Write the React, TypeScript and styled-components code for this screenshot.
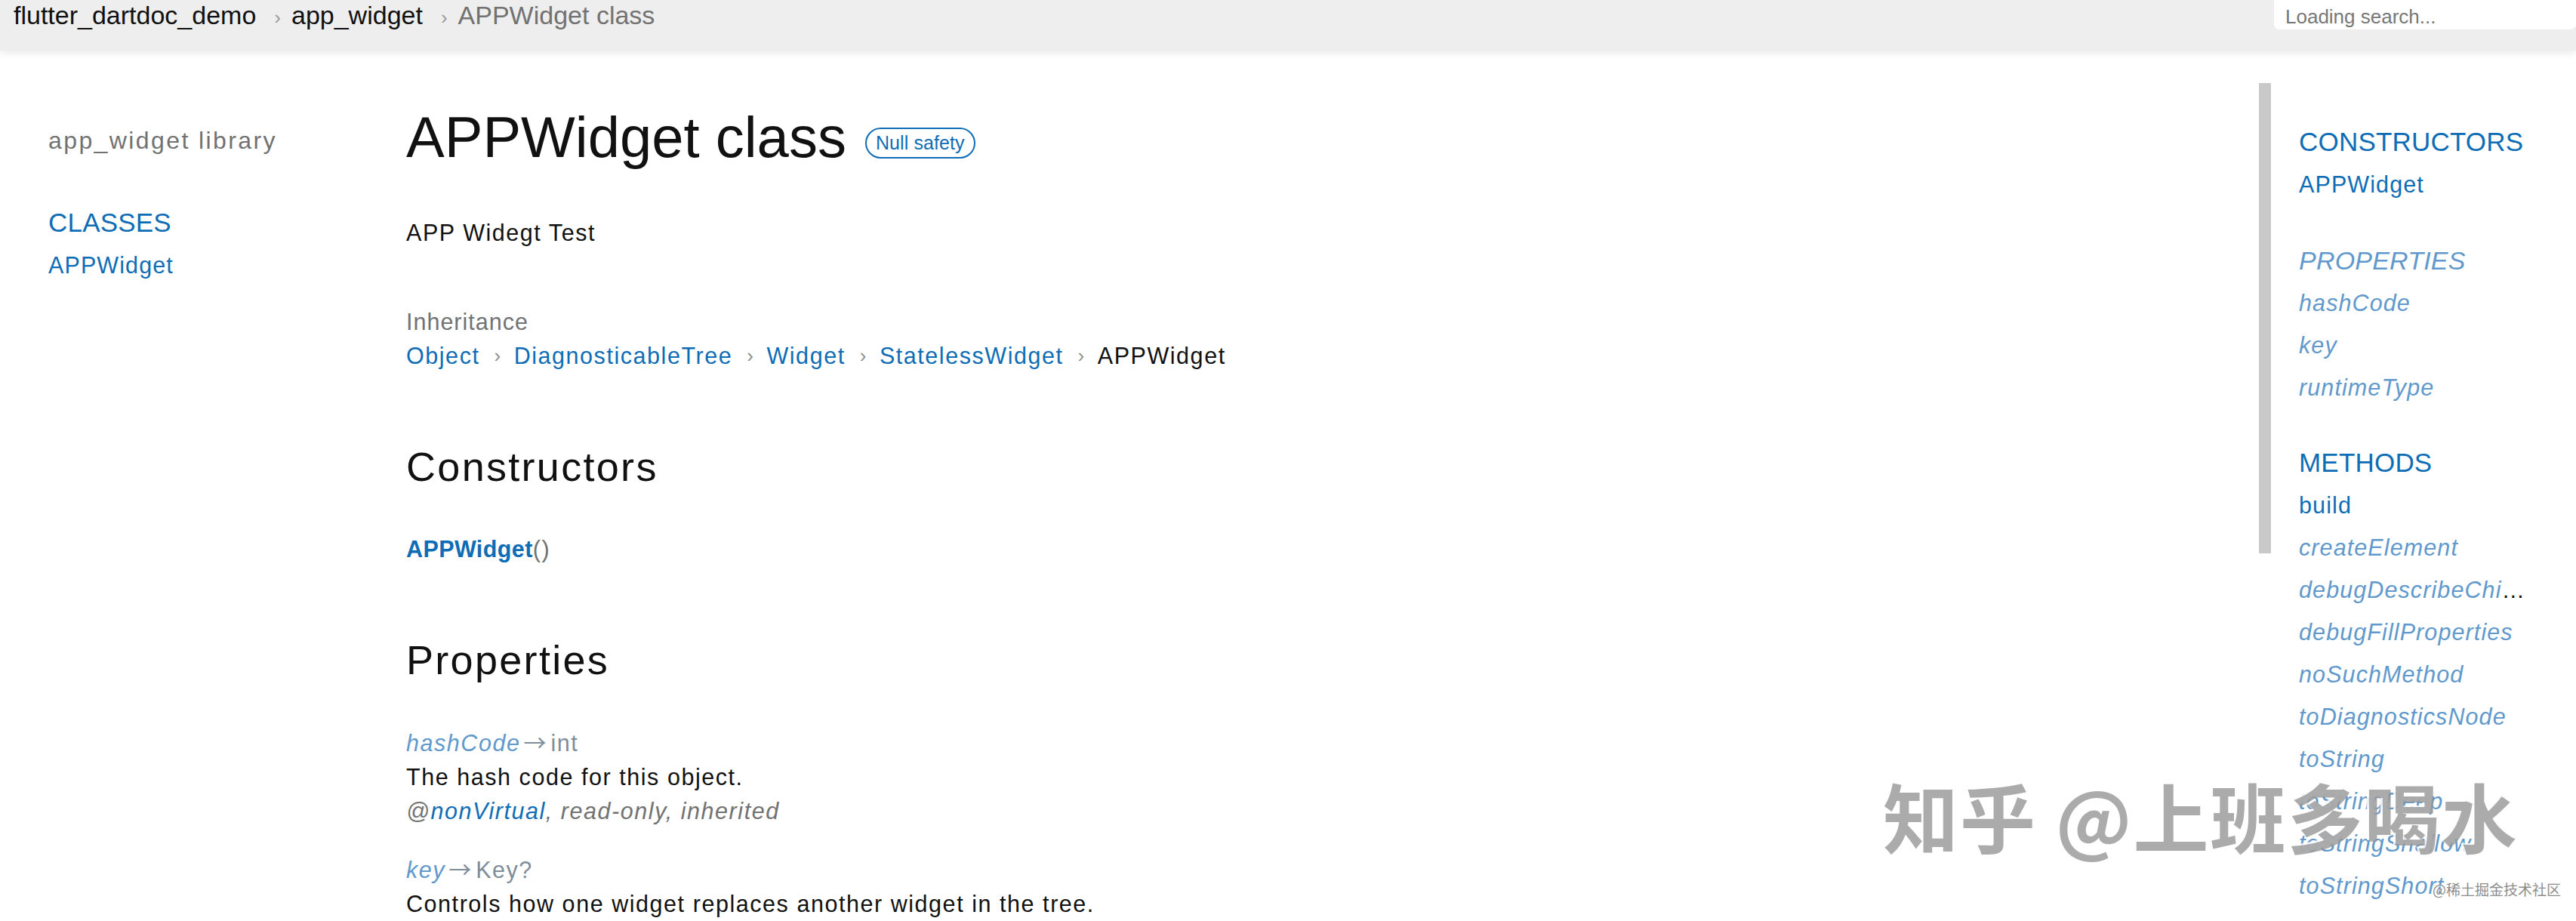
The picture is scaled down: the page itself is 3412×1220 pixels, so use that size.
import React from "react";
import styled, { createGlobalStyle } from "styled-components";

const BLUE = "#0e6db5";
const INHERITED = "#6199cc";
const MUTED = "#727272";
const TEXT = "#111111";

const GlobalStyle = createGlobalStyle`
  html, body {
    margin: 0;
    padding: 0;
    background: #ffffff;
  }
  body {
    font-family: "Liberation Sans", Arial, Helvetica, sans-serif;
    color: ${TEXT};
  }
  * { box-sizing: border-box; }
`;

const Page = styled.div`
  position: relative;
  width: 3412px;
  height: 1220px;
  overflow: hidden;
  background: #fff;
`;

/* ---------- header ---------- */

const Header = styled.header`
  position: relative;
  z-index: 2;
  display: flex;
  align-items: flex-start;
  height: 67px;
  background: #eeeeee;
  box-shadow: 0 3px 10px rgba(0, 0, 0, 0.09);
`;

const Breadcrumbs = styled.ol`
  display: flex;
  align-items: baseline;
  list-style: none;
  margin: 0;
  padding: 0 0 0 18px;
  font-size: 34px;
  line-height: 40px;
`;

const Crumb = styled.li<{ $current?: boolean }>`
  color: ${(p) => (p.$current ? MUTED : TEXT)};
  white-space: nowrap;
`;

const CrumbSep = styled.li`
  color: #9a9a9a;
  font-size: 26px;
  padding: 0 14px 0 24px;
`;

const Search = styled.div`
  margin-left: auto;
  margin-top: -8px;
  width: 400px;
  height: 47px;
  display: flex;
  align-items: flex-end;
  padding: 0 0 4px 15px;
  background: #ffffff;
  border-radius: 7px;
  font-size: 26px;
  line-height: 26px;
  color: #777777;
`;

/* ---------- body columns ---------- */

const Columns = styled.div`
  display: flex;
  align-items: flex-start;
`;

const LeftSidebar = styled.nav`
  flex: 0 0 538px;
  padding: 91px 0 0 64px;
`;

const LibraryName = styled.div`
  font-size: 32px;
  line-height: 56px;
  letter-spacing: 2.4px;
  color: ${MUTED};
  white-space: nowrap;
`;

const SideList = styled.ul`
  list-style: none;
  margin: 0;
  padding: 0;
`;

const SectionTitle = styled.li<{ $inherited?: boolean; $gap?: number }>`
  margin-top: ${(p) => p.$gap ?? 0}px;
  font-size: ${(p) => (p.$inherited ? 34 : 35)}px;
  line-height: 56px;
  letter-spacing: 0.2px;
  font-style: ${(p) => (p.$inherited ? "italic" : "normal")};
  color: ${(p) => (p.$inherited ? INHERITED : BLUE)};
  white-space: nowrap;
`;

const SideItem = styled.li`
  font-size: 30.5px;
  line-height: 56px;
  letter-spacing: 1.1px;
  color: ${TEXT};
  white-space: nowrap;
  overflow: hidden;
  text-overflow: ellipsis;
`;

const SideLink = styled.span<{ $inherited?: boolean }>`
  color: ${(p) => (p.$inherited ? INHERITED : BLUE)};
  font-style: ${(p) => (p.$inherited ? "italic" : "normal")};
`;

const Main = styled.main`
  flex: 1 1 auto;
  min-width: 0;
  padding-top: 70px;
  font-size: 30.5px;
  line-height: 45px;
  letter-spacing: 1.55px;
`;

const TitleRow = styled.div`
  display: flex;
  align-items: flex-end;
`;

const Title = styled.h1`
  margin: 0;
  font-size: 76px;
  line-height: 90px;
  font-weight: 400;
  letter-spacing: 0;
  color: ${TEXT};
`;

const Badge = styled.span`
  margin: 0 0 17px 25px;
  height: 41px;
  padding: 0 12px;
  border: 2px solid ${BLUE};
  border-radius: 21px;
  font-size: 25px;
  line-height: 37px;
  letter-spacing: 0.1px;
  color: ${BLUE};
  white-space: nowrap;
`;

const Description = styled.p`
  margin: 59px 0 0;
`;

const InheritanceBlock = styled.dl`
  margin: 73px 0 0;
`;

const InheritanceLabel = styled.dt`
  color: ${MUTED};
  letter-spacing: 1px;
`;

const Chain = styled.dd`
  margin: 0;
`;

const ChainList = styled.ul`
  display: flex;
  list-style: none;
  margin: 0;
  padding: 0;
`;

const ChainItem = styled.li<{ $current?: boolean }>`
  color: ${(p) => (p.$current ? TEXT : BLUE)};
  white-space: nowrap;
`;

const ChainSep = styled.li`
  color: #8f8f8f;
  font-size: 26px;
  padding: 0 16px 0 19px;
`;

const SectionHeading = styled.h2`
  margin: 92px 0 0;
  font-size: 54px;
  line-height: 64px;
  font-weight: 400;
  letter-spacing: 2.3px;
  color: ${TEXT};
`;

const Signature = styled.div`
  margin-top: 55px;
`;

const CtorName = styled.span`
  color: ${BLUE};
  font-weight: 700;
  letter-spacing: 0.4px;
`;

const Parens = styled.span`
  color: ${MUTED};
`;

const PropertyList = styled.dl`
  margin: 56px 0 0;
`;

const PropertyTerm = styled.dt<{ $gap?: number }>`
  margin-top: ${(p) => p.$gap ?? 0}px;
`;

const PropName = styled.span`
  color: ${INHERITED};
  font-style: italic;
`;

const PropType = styled.span`
  color: #7f8d99;
`;

const Arrow = styled.span`
  font-family: "Noto Sans CJK SC", "DejaVu Sans", sans-serif;
  font-size: 30px;
  line-height: 1;
  letter-spacing: 0;
  margin: 0 6px 0 4px;
`;

const PropDesc = styled.dd`
  margin: 0;
`;

const Features = styled.div`
  font-style: italic;
  color: ${MUTED};
`;

const Annotation = styled.span`
  color: ${BLUE};
`;

const RightSidebar = styled.aside`
  flex: 0 0 420px;
  display: flex;
  align-items: flex-start;
`;

const ScrollThumb = styled.div`
  flex: 0 0 16px;
  height: 623px;
  margin-top: 43px;
  background: #c9c9c9;
`;

const RightList = styled(SideList)`
  width: 302px;
  margin-left: 37px;
  padding-top: 93px;
`;

/* ---------- watermark overlay ---------- */

const Watermark = styled.div`
  position: absolute;
  left: 2494px;
  top: 1030px;
  font-family: "Noto Sans CJK SC", sans-serif;
  font-size: 100px;
  font-weight: 700;
  line-height: 1;
  letter-spacing: 2px;
  color: rgba(150, 150, 150, 0.8);
  text-shadow: -3px -2px 0 rgba(255, 255, 255, 0.85);
  white-space: nowrap;
  pointer-events: none;
`;

const SmallMark = styled.div`
  position: absolute;
  left: 3222px;
  top: 1168px;
  font-family: "Noto Sans CJK SC", sans-serif;
  font-size: 19px;
  line-height: 1;
  color: #8c8c8c;
  text-shadow: 1px 1px 0 #ffffff;
  white-space: nowrap;
`;

const methods: { name: string; inherited: boolean }[] = [
  { name: "build", inherited: false },
  { name: "createElement", inherited: true },
  { name: "debugDescribeChildren", inherited: true },
  { name: "debugFillProperties", inherited: true },
  { name: "noSuchMethod", inherited: true },
  { name: "toDiagnosticsNode", inherited: true },
  { name: "toString", inherited: true },
  { name: "toStringDeep", inherited: true },
  { name: "toStringShallow", inherited: true },
  { name: "toStringShort", inherited: true },
];

const chain = ["Object", "DiagnosticableTree", "Widget", "StatelessWidget"];

export default function App() {
  return (
    <Page>
      <GlobalStyle />
      <Header>
        <Breadcrumbs>
          <Crumb>flutter_dartdoc_demo</Crumb>
          <CrumbSep>›</CrumbSep>
          <Crumb>app_widget</Crumb>
          <CrumbSep>›</CrumbSep>
          <Crumb $current>APPWidget class</Crumb>
        </Breadcrumbs>
        <Search>Loading search...</Search>
      </Header>

      <Columns>
        <LeftSidebar>
          <LibraryName>app_widget library</LibraryName>
          <SideList>
            <SectionTitle $gap={53}>CLASSES</SectionTitle>
            <SideItem>
              <SideLink>APPWidget</SideLink>
            </SideItem>
          </SideList>
        </LeftSidebar>

        <Main>
          <TitleRow>
            <Title>APPWidget class</Title>
            <Badge>Null safety</Badge>
          </TitleRow>
          <Description>APP Widegt Test</Description>

          <InheritanceBlock>
            <InheritanceLabel>Inheritance</InheritanceLabel>
            <Chain>
              <ChainList>
                {chain.map((c) => (
                  <React.Fragment key={c}>
                    <ChainItem>{c}</ChainItem>
                    <ChainSep>›</ChainSep>
                  </React.Fragment>
                ))}
                <ChainItem $current>APPWidget</ChainItem>
              </ChainList>
            </Chain>
          </InheritanceBlock>

          <SectionHeading>Constructors</SectionHeading>
          <Signature>
            <CtorName>APPWidget</CtorName>
            <Parens>()</Parens>
          </Signature>

          <SectionHeading>Properties</SectionHeading>
          <PropertyList>
            <PropertyTerm>
              <PropName>hashCode</PropName>
              <PropType>
                <Arrow>→</Arrow>int
              </PropType>
            </PropertyTerm>
            <PropDesc>
              The hash code for this object.
              <Features>
                @<Annotation>nonVirtual</Annotation>, read-only, inherited
              </Features>
            </PropDesc>
            <PropertyTerm $gap={33}>
              <PropName>key</PropName>
              <PropType>
                <Arrow>→</Arrow>Key?
              </PropType>
            </PropertyTerm>
            <PropDesc>Controls how one widget replaces another widget in the tree.</PropDesc>
          </PropertyList>
        </Main>

        <RightSidebar>
          <ScrollThumb />
          <RightList>
            <SectionTitle>CONSTRUCTORS</SectionTitle>
            <SideItem>
              <SideLink>APPWidget</SideLink>
            </SideItem>

            <SectionTitle $inherited $gap={45}>
              PROPERTIES
            </SectionTitle>
            {["hashCode", "key", "runtimeType"].map((p) => (
              <SideItem key={p}>
                <SideLink $inherited>{p}</SideLink>
              </SideItem>
            ))}

            <SectionTitle $gap={44}>METHODS</SectionTitle>
            {methods.map((m) => (
              <SideItem key={m.name}>
                <SideLink $inherited={m.inherited}>{m.name}</SideLink>
              </SideItem>
            ))}
          </RightList>
        </RightSidebar>
      </Columns>

      <Watermark>知乎 @上班多喝水</Watermark>
      <SmallMark>@稀土掘金技术社区</SmallMark>
    </Page>
  );
}
